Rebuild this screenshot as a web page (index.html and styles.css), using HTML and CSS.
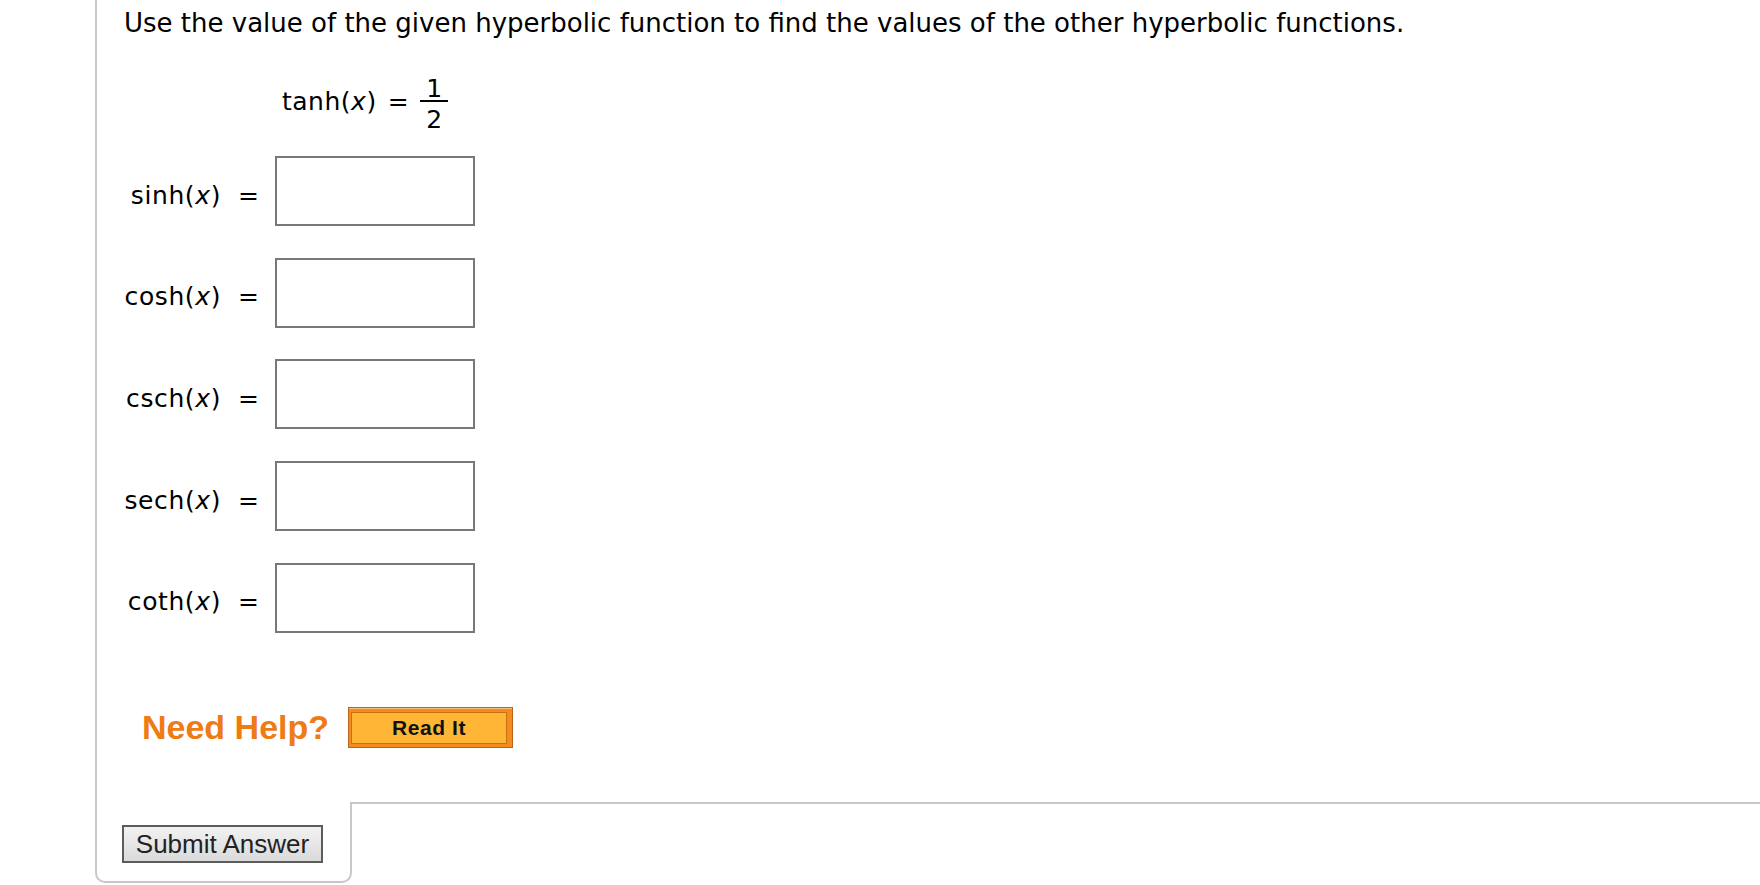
FILE: index.html
```html
<!DOCTYPE html>
<html>
<head>
<meta charset="utf-8">
<title>Hyperbolic functions</title>
<link rel="stylesheet" href="styles.css">
</head>
<body>
<div class="panel">
  <div class="question">
    <p class="prompt">Use the value of the given hyperbolic function to find the values of the other hyperbolic functions.</p>
    <div class="given">
      <span class="math">tanh(<i>x</i>)</span>
      <span class="math eq">=</span>
      <span class="frac"><span class="num">1</span><span class="bar"></span><span class="den">2</span></span>
    </div>
    <div class="answers">
      <span class="label">sinh(<i>x</i>)</span><span class="equals">=</span><input class="box" type="text">
      <span class="label">cosh(<i>x</i>)</span><span class="equals">=</span><input class="box" type="text">
      <span class="label">csch(<i>x</i>)</span><span class="equals">=</span><input class="box" type="text">
      <span class="label">sech(<i>x</i>)</span><span class="equals">=</span><input class="box" type="text">
      <span class="label">coth(<i>x</i>)</span><span class="equals">=</span><input class="box" type="text">
    </div>
    <div class="help">
      <span class="need">Need Help?</span>
      <span class="readit"><span class="readit-inner">Read It</span></span>
    </div>
  </div>
  <div class="footer">
    <div class="submit-cell"><button class="submit" type="button">Submit Answer</button></div>
    <div class="rest"></div>
  </div>
</div>
</body>
</html>
```
FILE: styles.css
```css
html, body {
  margin: 0;
  padding: 0;
  background: #fff;
}
body {
  font-family: "DejaVu Sans", Verdana, sans-serif;
  color: #000;
  overflow: hidden;
}
.panel {
  margin-left: 95px;
}
.question {
  border-left: 2px solid #c8c8c8;
  padding: 8px 0 54px 27px;
}
.prompt {
  margin: 0;
  font-size: 26px;
  line-height: 30px;
  white-space: nowrap;
}
.given {
  display: flex;
  align-items: center;
  margin-top: 33px;
  margin-bottom: 2px;
  margin-left: 158px;
  font-size: 25px;
}
.math {
  letter-spacing: 0.5px;
}
.math i {
  font-style: italic;
}
.eq {
  margin-left: 11px;
  margin-right: 11px;
}
.frac {
  display: inline-flex;
  flex-direction: column;
  align-items: center;
  width: 28px;
  padding-top: 7px;
  font-size: 25px;
}
.num {
  line-height: 22px;
}
.bar {
  width: 28px;
  height: 2px;
  background: #000;
}
.den {
  line-height: 22px;
  padding-top: 7px;
}
.answers {
  display: grid;
  grid-template-columns: 114px 37px 200px;
  row-gap: 31.7px;
  align-items: center;
  margin-top: 25px;
  font-size: 25px;
}
.label {
  text-align: right;
  padding-right: 17px;
  padding-top: 8px;
  letter-spacing: 0.6px;
  white-space: nowrap;
}
.equals {
  padding-top: 8px;
}
.box {
  box-sizing: border-box;
  width: 200px;
  height: 70px;
  margin: 0;
  border: 2px solid #787878;
  background: #fff;
  padding: 0;
}
.help {
  display: flex;
  align-items: center;
  gap: 19px;
  margin-top: 74px;
  margin-left: 18px;
}
.need {
  font-family: "Liberation Sans", Arial, sans-serif;
  font-weight: bold;
  font-size: 34px;
  color: #ee7b14;
}
.readit {
  box-sizing: border-box;
  display: inline-flex;
  width: 165px;
  height: 41px;
  padding: 4px 5px 3px 2px;
  background: #f28c1c;
  border: 1px solid #b9651c;
  box-shadow: inset 0 1px 0 #f8c07a;
}
.readit-inner {
  box-sizing: border-box;
  flex: 1;
  display: flex;
  align-items: center;
  justify-content: center;
  background: #ffb636;
  border: 1px solid #c96f16;
  font-family: "Liberation Sans", Arial, sans-serif;
  font-weight: bold;
  font-size: 21px;
  letter-spacing: 0.6px;
  color: #111;
}
.footer {
  display: flex;
}
.submit-cell {
  box-sizing: border-box;
  width: 257px;
  height: 81px;
  border: 2px solid #c8c8c8;
  border-top: none;
  border-radius: 0 0 10px 10px;
  padding: 23px 0 0 25px;
}
.rest {
  flex: 1;
  border-top: 2px solid #c8c8c8;
}
.submit {
  box-sizing: border-box;
  display: block;
  width: 201px;
  height: 38px;
  margin: 0;
  padding: 0;
  border: 2px solid #5c5c5c;
  border-radius: 0;
  background: linear-gradient(#f2f2f2, #dadada);
  font-family: "Liberation Sans", Arial, sans-serif;
  font-size: 26px;
  color: #222;
  line-height: 34px;
}
```
